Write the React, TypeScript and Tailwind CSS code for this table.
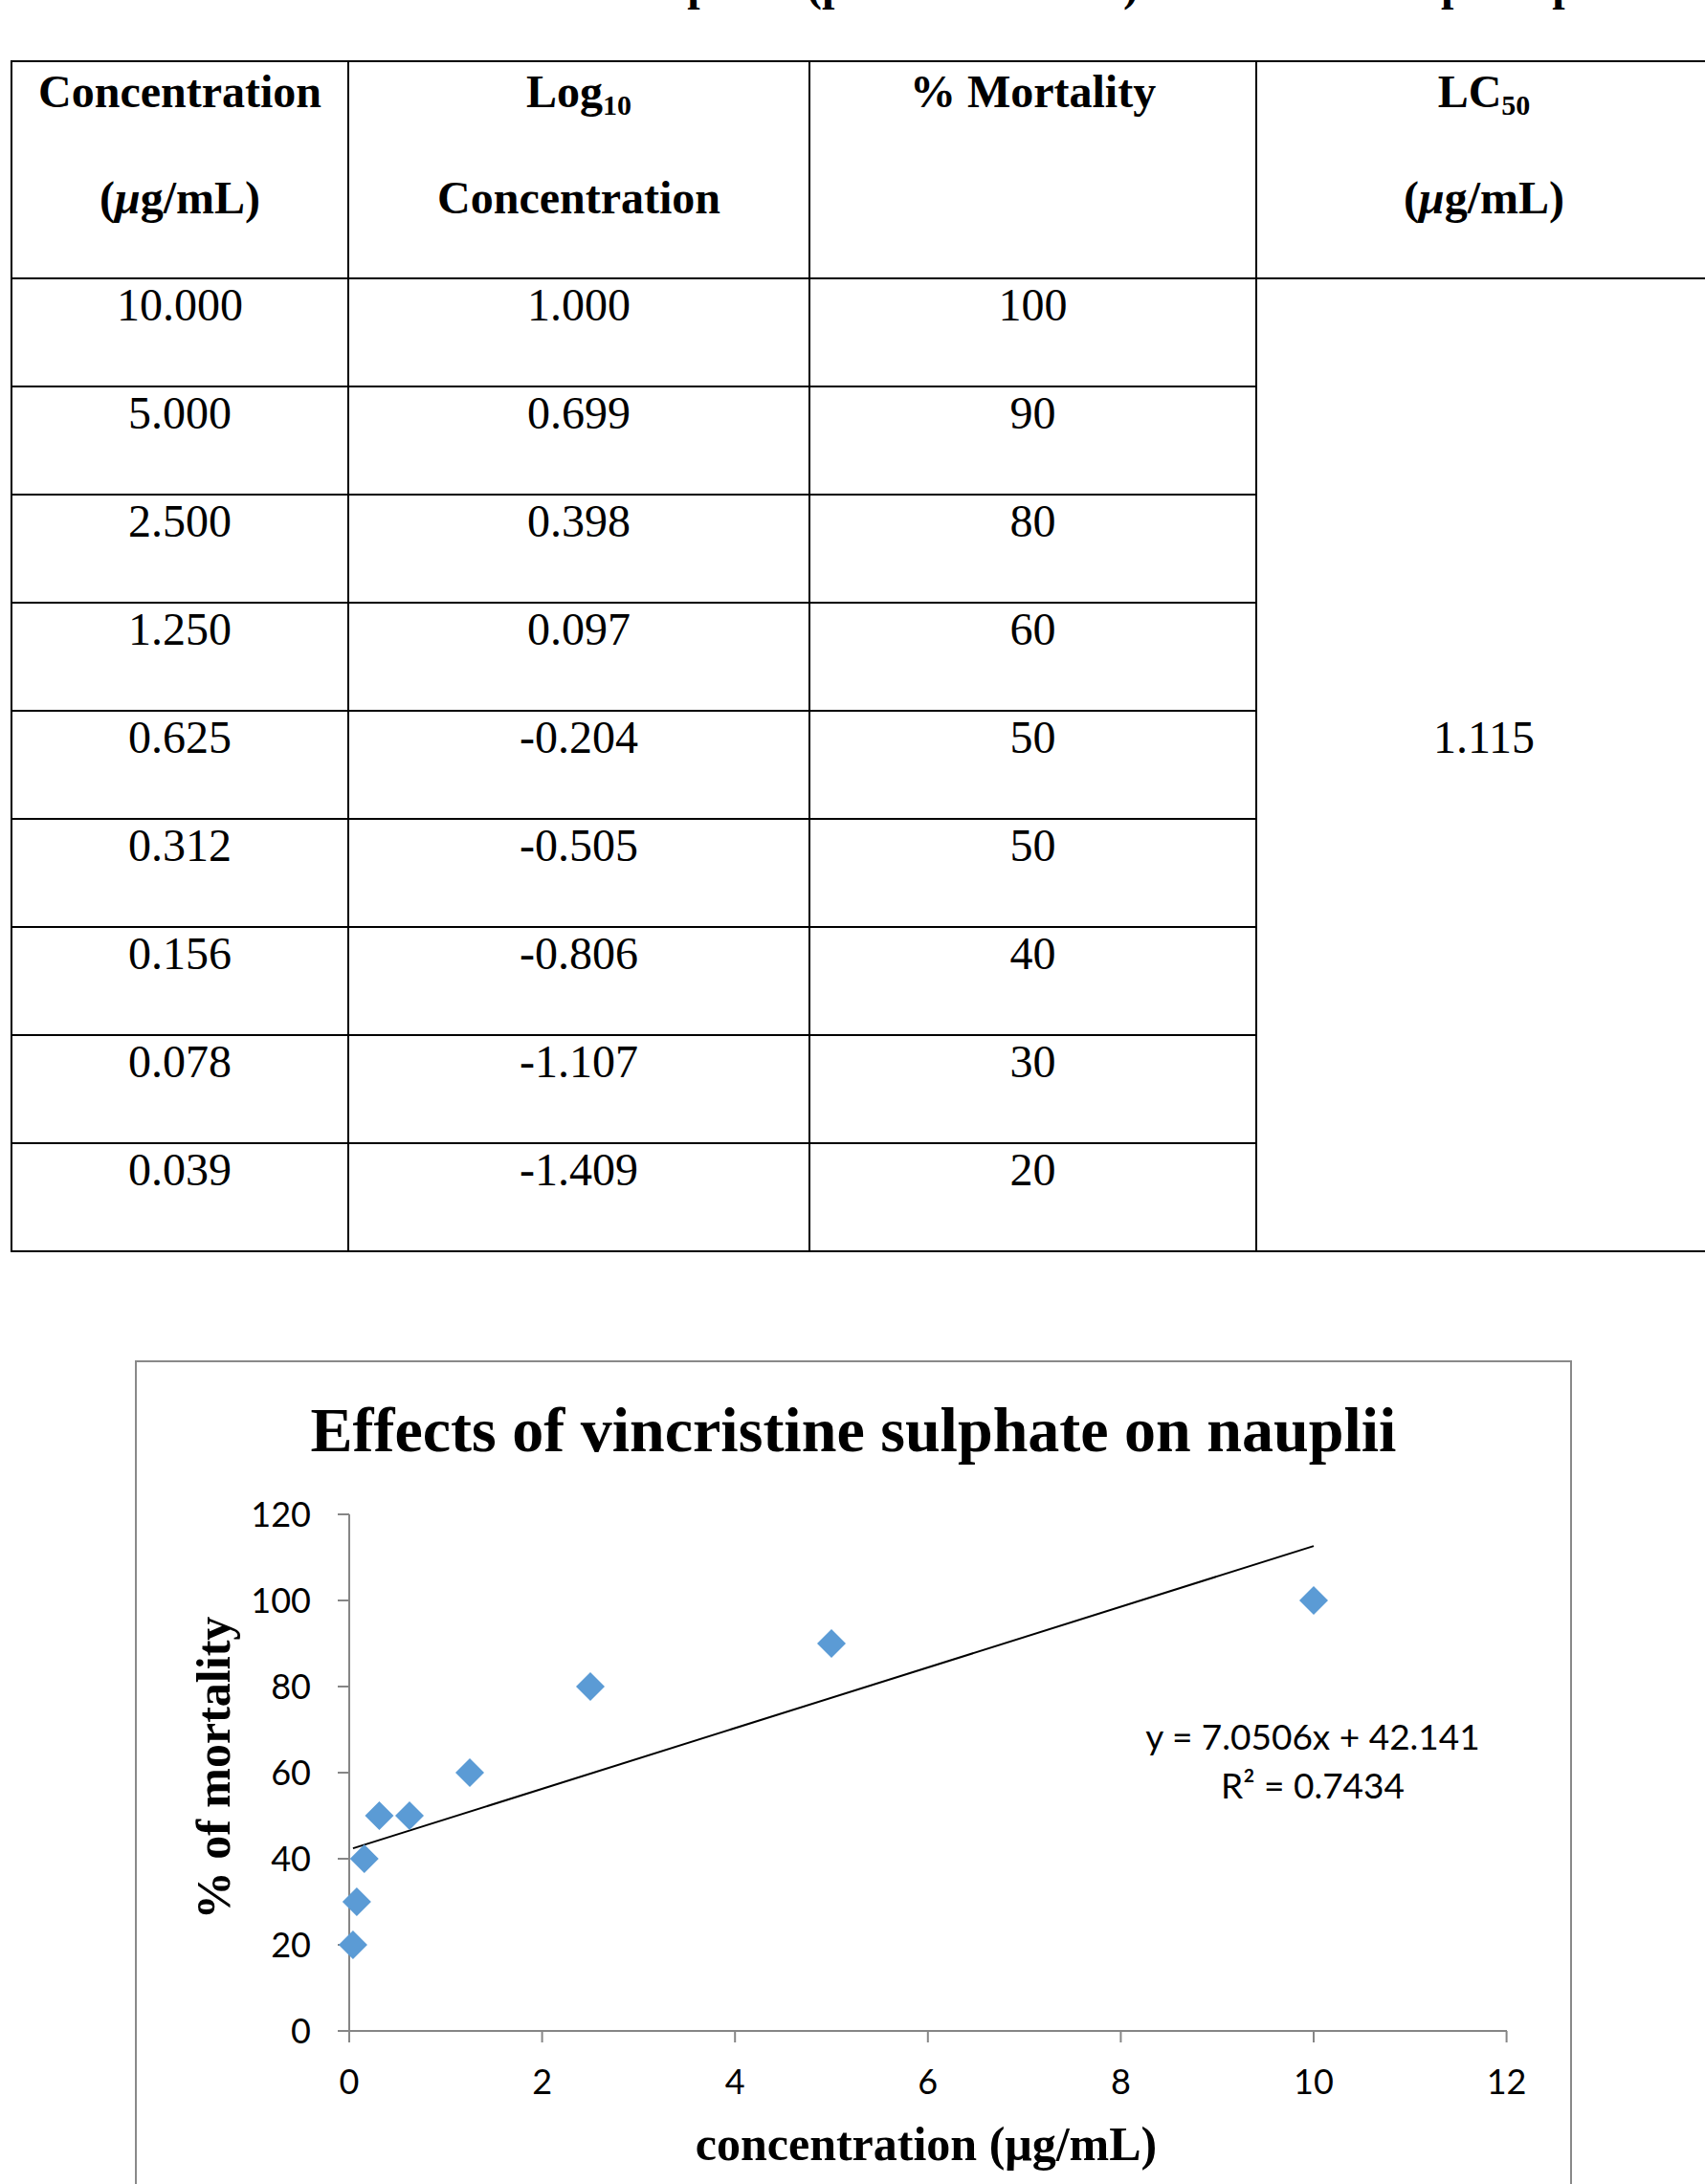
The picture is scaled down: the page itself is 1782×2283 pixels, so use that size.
import { Fragment } from "react";

const rows = [
  ["10.000", "1.000", "100"],
  ["5.000", "0.699", "90"],
  ["2.500", "0.398", "80"],
  ["1.250", "0.097", "60"],
  ["0.625", "-0.204", "50"],
  ["0.312", "-0.505", "50"],
  ["0.156", "-0.806", "40"],
  ["0.078", "-1.107", "30"],
  ["0.039", "-1.409", "20"],
];

const points: [number, number][] = [
  [10, 100],
  [5, 90],
  [2.5, 80],
  [1.25, 60],
  [0.625, 50],
  [0.312, 50],
  [0.156, 40],
  [0.078, 30],
  [0.039, 20],
];

// plot mapping, in page coordinates
const px = (v: number) => 365 + v * 100.8;
const py = (v: number) => 2123 - v * 4.5;

function Chart() {
  const axis = "#868686";
  const yTicks = [0, 20, 40, 60, 80, 100, 120];
  const xTicks = [0, 2, 4, 6, 8, 10, 12];
  const x1 = 0.039;
  const x2 = 10;

  return (
    <div className="ml-[141px] mt-[113px] w-[1502px] border-2 border-[#898989] bg-white">
      <div className="pt-[37px] text-center font-['Liberation_Serif',serif] text-[66px] font-bold leading-[67px] text-black">
        Effects of vincristine sulphate on nauplii
      </div>
      <svg width="1498" height="770" className="block">
        <g transform="translate(-143 -1528)">
          {/* axes */}
          <line x1={365} y1={1583} x2={365} y2={2123} stroke={axis} strokeWidth={2} />
          <line x1={353} y1={2123} x2={1575} y2={2123} stroke={axis} strokeWidth={2} />
          {yTicks.map((t) => (
            <g key={t}>
              <line x1={353} y1={py(t)} x2={365} y2={py(t)} stroke={axis} strokeWidth={2} />
              <text
                x={325}
                y={py(t) + 13}
                textAnchor="end"
                fontFamily="Lato, 'Noto Sans', sans-serif"
                fontSize={36}
                fill="#000"
              >
                {t}
              </text>
            </g>
          ))}
          {xTicks.map((t) => (
            <g key={t}>
              <line x1={px(t)} y1={2123} x2={px(t)} y2={2135} stroke={axis} strokeWidth={2} />
              <text
                x={px(t)}
                y={2189}
                textAnchor="middle"
                fontFamily="Lato, 'Noto Sans', sans-serif"
                fontSize={36}
                fill="#000"
              >
                {t}
              </text>
            </g>
          ))}

          {/* linear trendline */}
          <line
            x1={px(x1)}
            y1={py(7.0506 * x1 + 42.141)}
            x2={px(x2)}
            y2={py(7.0506 * x2 + 42.141)}
            stroke="#000"
            strokeWidth={2}
          />

          {points.map(([x, y]) => {
            const cx = px(x);
            const cy = py(y);
            return (
              <polygon
                key={x}
                points={`${cx},${cy - 15} ${cx + 15},${cy} ${cx},${cy + 15} ${cx - 15},${cy}`}
                fill="#5B9BD5"
              />
            );
          })}

          <text
            x={1372}
            y={1829}
            textAnchor="middle"
            fontFamily="Lato, 'Noto Sans', sans-serif"
            fontSize={37}
            fill="#000"
          >
            y = 7.0506x + 42.141
          </text>
          <text
            x={1372}
            y={1880}
            textAnchor="middle"
            fontFamily="Lato, 'Noto Sans', sans-serif"
            fontSize={37}
            fill="#000"
          >
            R² = 0.7434
          </text>

          <text
            x={968}
            y={2258}
            textAnchor="middle"
            fontFamily="'Liberation Serif', serif"
            fontWeight="bold"
            fontSize={50}
            fill="#000"
          >
            concentration (μg/mL)
          </text>
          <text
            transform="translate(240 1848) rotate(-90)"
            textAnchor="middle"
            fontFamily="'Liberation Serif', serif"
            fontWeight="bold"
            fontSize={50}
            fill="#000"
          >
            % of mortality
          </text>
        </g>
      </svg>
    </div>
  );
}

export default function App() {
  return (
    <div className="h-[2283px] w-[1782px] overflow-hidden bg-white text-black">
      {/* caption, only its descenders show at the top edge */}
      <div className="h-[63px] overflow-hidden">
        <div className="-mt-[40px] flex whitespace-nowrap font-['Liberation_Serif',serif] text-[48px] font-bold leading-[48px]">
          <div className="w-[833px] text-right">Table 2: Effect of vincristine sulphate</div>
          <div className="ml-[10px]">(positive control) on brine shrimp nauplii</div>
        </div>
      </div>

      <div className="ml-[11px] grid w-[1779px] grid-cols-[352px_482px_467px_476px] border-l-2 border-t-2 border-black font-['Liberation_Serif',serif] text-[48px] leading-[48px]">
        <div className="h-[227px] border-b-2 border-r-2 border-black pt-[7px] text-center font-bold">
          <div>Concentration</div>
          <div className="mt-[63px]">
            (<i>μ</i>g/mL)
          </div>
        </div>
        <div className="h-[227px] border-b-2 border-r-2 border-black pt-[7px] text-center font-bold">
          <div>
            Log<sub className="text-[30px]">10</sub>
          </div>
          <div className="mt-[63px]">Concentration</div>
        </div>
        <div className="h-[227px] border-b-2 border-r-2 border-black pt-[7px] text-center font-bold">
          <div>% Mortality</div>
        </div>
        <div className="h-[227px] border-b-2 border-r-2 border-black pt-[7px] text-center font-bold">
          <div>
            LC<sub className="text-[30px]">50</sub>
          </div>
          <div className="mt-[63px]">
            (<i>μ</i>g/mL)
          </div>
        </div>

        {rows.map((r, i) => (
          <Fragment key={r[0]}>
            <div className="h-[113px] border-b-2 border-r-2 border-black pt-[3px] text-center">{r[0]}</div>
            <div className="h-[113px] border-b-2 border-r-2 border-black pt-[3px] text-center">{r[1]}</div>
            <div className="h-[113px] border-b-2 border-r-2 border-black pt-[3px] text-center">{r[2]}</div>
            {i === 0 && (
              <div className="row-span-9 border-b-2 border-r-2 border-black pt-[455px] text-center">1.115</div>
            )}
          </Fragment>
        ))}
      </div>

      <Chart />
    </div>
  );
}
